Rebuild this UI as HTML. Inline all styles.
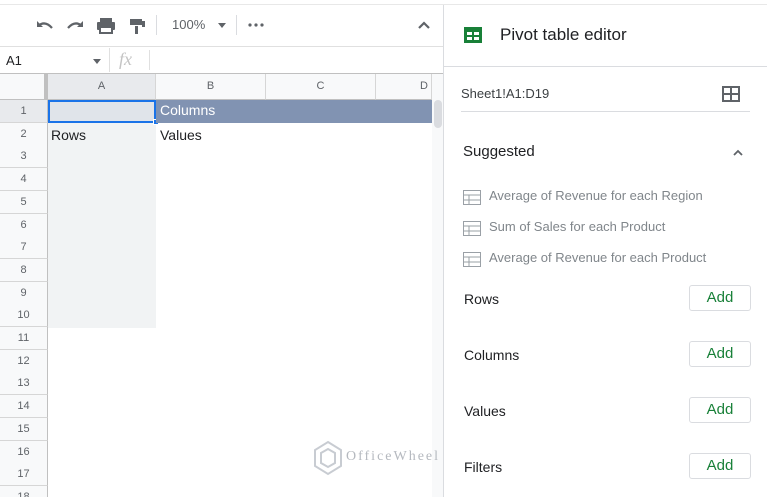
<!DOCTYPE html>
<html><head><style>
*{margin:0;padding:0;box-sizing:border-box}
html,body{width:767px;height:497px;overflow:hidden}
body{background:#fff;font-family:"Liberation Sans",Arial,sans-serif;position:relative}
.a{position:absolute}
.rh{position:absolute;left:0;width:48px;background:#f8f9fa;border-right:1px solid #c0c0c0;border-bottom:1px solid #d6d6d6;font-size:11px;color:#5f6368;text-align:center}
.ch{position:absolute;top:74px;height:26px;background:#f8f9fa;border-right:1px solid #d6d6d6;border-bottom:1px solid #c0c0c0;font-size:11px;color:#5f6368;text-align:center;line-height:25px}
.lbl{position:absolute;left:464px;font-size:14px;color:#202124}
.add{position:absolute;left:689px;width:62px;height:26px;border:1px solid #dadce0;border-radius:3px;color:#188038;font-size:15px;text-align:center;line-height:23px}
.sg{position:absolute;left:463px;font-size:13px;color:#80868b}
.sg svg{position:absolute;left:0;top:2px}
.sg span{position:absolute;left:26px;white-space:nowrap}
</style></head><body>
<div class="a" style="left:0;top:4px;width:767px;height:1px;background:#e8e8e8"></div>
<svg class="a" style="left:34px;top:16px" width="120" height="20" viewBox="0 0 120 20">
<path d="M4 10 q7-6 14 2" stroke="#5f6368" stroke-width="2.2" fill="none"/><path d="M3 5 v6 h6" fill="#5f6368"/>
<path d="M48 10 q-7-6 -14 2" stroke="#5f6368" stroke-width="2.2" fill="none"/><path d="M49 5 v6 h-6" fill="#5f6368"/>
<rect x="63" y="6" width="18" height="8" rx="1" fill="#5f6368"/><rect x="66" y="2" width="12" height="4" fill="#5f6368"/><rect x="66" y="11" width="12" height="6" fill="#fff" stroke="#5f6368" stroke-width="2"/>
<rect x="96" y="3" width="12" height="6" fill="#5f6368"/><rect x="108" y="5" width="3" height="6" fill="#5f6368"/><rect x="101" y="10" width="3" height="8" fill="#5f6368"/>
</svg>
<div class="a" style="left:156px;top:15px;width:1px;height:20px;background:#dadce0"></div>
<div class="a" style="left:172px;top:17px;font-size:13px;color:#5f6368">100%</div>
<div class="a" style="left:218px;top:23px;border:4px solid transparent;border-top:5px solid #5f6368"></div>
<div class="a" style="left:236px;top:15px;width:1px;height:20px;background:#dadce0"></div>
<svg class="a" style="left:248px;top:23px" width="16" height="4"><circle cx="2" cy="2" r="1.6" fill="#5f6368"/><circle cx="8" cy="2" r="1.6" fill="#5f6368"/><circle cx="14" cy="2" r="1.6" fill="#5f6368"/></svg>
<svg class="a" style="left:417px;top:20px" width="14" height="10"><path d="M2 8 L7 3 L12 8" stroke="#5f6368" stroke-width="2.2" fill="none"/></svg>
<div class="a" style="left:0;top:46px;width:443px;height:1px;background:#e0e0e0"></div>
<div class="a" style="left:6px;top:53px;font-size:13px;color:#202124">A1</div>
<div class="a" style="left:93px;top:59px;border:4px solid transparent;border-top:5px solid #5f6368"></div>
<div class="a" style="left:109px;top:48px;width:1px;height:24px;background:#e0e0e0"></div>
<div class="a" style="left:119px;top:49px;font-size:18px;color:#c4c4c4;font-style:italic;font-family:'Liberation Serif',serif">fx</div>
<div class="a" style="left:149px;top:50px;width:1px;height:20px;background:#e0e0e0"></div>
<div class="a" style="left:0;top:73px;width:443px;height:1px;background:#c0c0c0"></div>
<div class="a" style="left:0;top:74px;width:48px;height:26px;background:#f8f9fa;border-right:4px solid #c0c0c0;border-bottom:1px solid #c0c0c0"></div>
<div class="ch" style="left:48px;width:108px;background:#e8eaed">A</div>
<div class="ch" style="left:156px;width:110px">B</div>
<div class="ch" style="left:266px;width:110px">C</div>
<div class="ch" style="left:376px;width:56px;text-align:right;overflow:hidden">D&nbsp;</div>
<div class="a" style="left:48px;top:100px;width:108px;height:228px;background:#f1f3f4"></div>
<div class="a" style="left:48px;top:100px;width:108px;height:23px;background:#e0e4ea;border:2px solid #1a73e8"></div>
<div class="a" style="left:153px;top:119px;width:6px;height:6px;background:#1a73e8;border:1px solid #fff"></div>
<div class="a" style="left:156px;top:100px;width:276px;height:23px;background:#8193b2;color:#fff;font-size:14px;line-height:21px;padding-left:4px">Columns</div>
<div class="a" style="left:51px;top:127px;font-size:14px;color:#202124">Rows</div>
<div class="a" style="left:160px;top:127px;font-size:14px;color:#202124">Values</div>
<div id="rows"></div>
<div class="a" style="left:432px;top:74px;width:12px;height:423px;background:#f8f9fa"></div>
<div class="a" style="left:434px;top:100px;width:8px;height:28px;background:#dadce0;border-radius:4px"></div>
<svg class="a" style="left:312px;top:440px" width="32" height="36"><path d="M16 2 L29 10 V26 L16 34 L3 26 V10 Z" fill="none" stroke="#c8ccd2" stroke-width="2"/><path d="M16 9 L23 13 V23 L16 27 L9 23 V13Z" fill="none" stroke="#c8ccd2" stroke-width="2"/></svg>
<div class="a" style="left:346px;top:449px;font-size:14px;color:#b5b9bf;font-family:'Liberation Serif',serif;letter-spacing:2px">OfficeWheel</div>
<div class="a" style="left:443px;top:5px;width:1px;height:492px;background:#dadce0"></div>
<svg class="a" style="left:464px;top:27px" width="18" height="16"><rect x="0" y="0" width="18" height="16" fill="#188038"/><rect x="3" y="5" width="5" height="3" fill="#fff"/><rect x="10" y="5" width="5" height="3" fill="#fff"/><rect x="3" y="10" width="5" height="3" fill="#fff"/><rect x="10" y="10" width="5" height="3" fill="#fff"/></svg>
<div class="a" style="left:500px;top:25px;font-size:17px;color:#202124">Pivot table editor</div>
<div class="a" style="left:444px;top:66px;width:323px;height:1px;background:#dadce0"></div>
<div class="a" style="left:461px;top:86px;font-size:13px;color:#3c4043">Sheet1!A1:D19</div>
<svg class="a" style="left:722px;top:86px" width="18" height="16"><rect x="1" y="1" width="16" height="14" fill="none" stroke="#5f6368" stroke-width="2"/><path d="M9 1V15M1 8H17" stroke="#5f6368" stroke-width="2"/></svg>
<div class="a" style="left:461px;top:111px;width:289px;height:1px;background:#dadce0"></div>
<div class="a" style="left:463px;top:143px;font-size:15px;color:#202124">Suggested</div>
<svg class="a" style="left:732px;top:149px" width="12" height="8"><path d="M2 6 L6 2 L10 6" stroke="#5f6368" stroke-width="1.8" fill="none"/></svg>
<div class="sg" style="top:188px"><svg width="18" height="15"><rect x="0.5" y="0.5" width="17" height="14" fill="none" stroke="#9aa0a6"/><path d="M0 5H18M0 10H18M6 5V15" stroke="#9aa0a6"/></svg><span>Average of Revenue for each Region</span></div>
<div class="sg" style="top:219px"><svg width="18" height="15"><rect x="0.5" y="0.5" width="17" height="14" fill="none" stroke="#9aa0a6"/><path d="M0 5H18M0 10H18M6 5V15" stroke="#9aa0a6"/></svg><span>Sum of Sales for each Product</span></div>
<div class="sg" style="top:250px"><svg width="18" height="15"><rect x="0.5" y="0.5" width="17" height="14" fill="none" stroke="#9aa0a6"/><path d="M0 5H18M0 10H18M6 5V15" stroke="#9aa0a6"/></svg><span>Average of Revenue for each Product</span></div>
<div class="lbl" style="top:291px">Rows</div><div class="add" style="top:285px">Add</div>
<div class="lbl" style="top:347px">Columns</div><div class="add" style="top:341px">Add</div>
<div class="lbl" style="top:403px">Values</div><div class="add" style="top:397px">Add</div>
<div class="lbl" style="top:459px">Filters</div><div class="add" style="top:453px">Add</div>
<script>
var h='';for(var i=1;i<=18;i++){var t=100+(i-1)*22.7;h+='<div class="rh" style="top:'+t+'px;height:23px;line-height:22px;'+(i==1?'background:#e8eaed;':'')+'">'+i+'</div>';}
document.getElementById('rows').innerHTML=h;
</script>
</body></html>
